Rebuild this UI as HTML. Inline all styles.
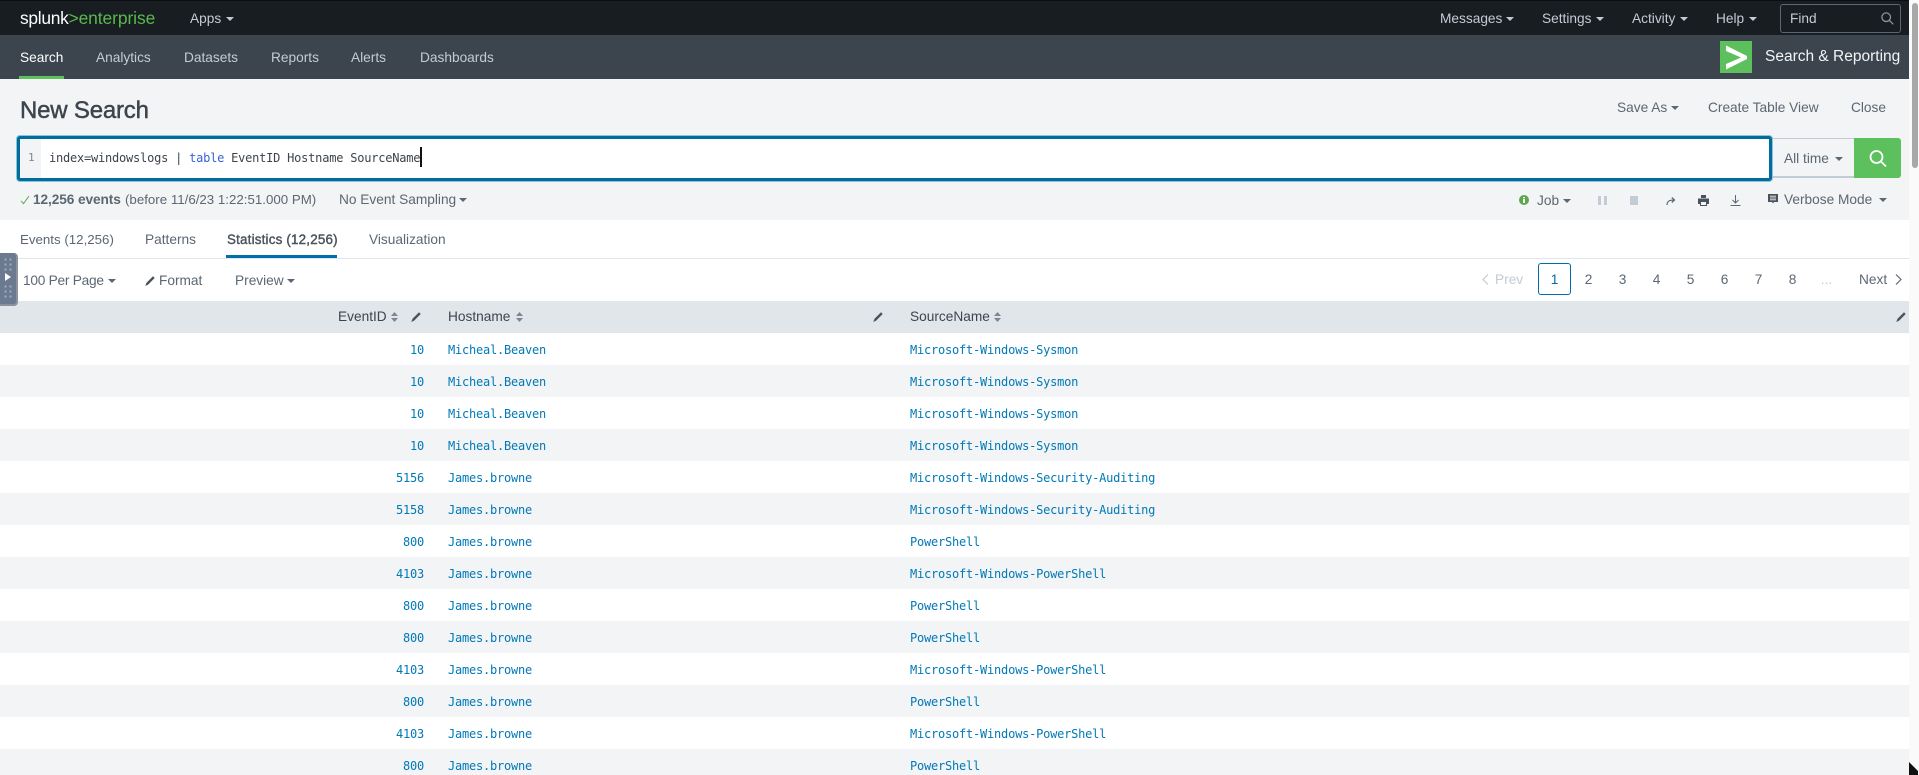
<!DOCTYPE html>
<html lang="en"><head><meta charset="utf-8"><title>Search | Splunk</title>
<style>
*{box-sizing:border-box}
html,body{margin:0;padding:0;width:1919px;height:775px;overflow:hidden;background:#fff;font-family:"Liberation Sans",sans-serif;font-size:13.7px;color:#5c6773}
.a{position:absolute}
.t{position:absolute;white-space:nowrap;line-height:20px;height:20px}
.c{position:absolute;width:0;height:0;border-left:4px solid transparent;border-right:4px solid transparent;border-top:4px solid currentColor}
.top .t,.top .c{color:#c3cbd4}
.nav .t{color:#c3cbd4}
.m{font-family:"DejaVu Sans Mono","Liberation Mono",monospace;font-size:12px;letter-spacing:-.22px}
.r{position:absolute;left:0;width:1909px;height:32px;background:#fff}
.r:nth-child(even){background:#f2f4f5}
.r span{position:absolute;top:7px;line-height:21px;white-space:nowrap;color:#0079b8;font-family:"DejaVu Sans Mono","Liberation Mono",monospace;font-size:12px;letter-spacing:-.22px}
.r .i{right:1485px;text-align:right}
.r .h{left:448px}
.r .s{left:910px}
.pg{position:absolute;top:270px;width:20px;text-align:center;line-height:20px;color:#5c6773}
svg{position:absolute;display:block}
</style></head><body>

<!-- top bar -->
<div class="a top" style="left:0;top:0;width:1909px;height:35px;background:#171d21;border-top:1px solid #0b0e10">
<div class="t" style="left:20px;top:7px;font-size:17.4px;letter-spacing:-.3px;color:#fff">splunk<span style="color:#5cb84d;letter-spacing:-.07px">&gt;enterprise</span></div>
<div class="t" style="left:190px;top:8px">Apps</div><div class="c" style="left:226px;top:16px"></div>
<div class="t" style="left:1440px;top:8px">Messages</div><div class="c" style="left:1506px;top:16px"></div>
<div class="t" style="left:1542px;top:8px">Settings</div><div class="c" style="left:1596px;top:16px"></div>
<div class="t" style="left:1632px;top:8px">Activity</div><div class="c" style="left:1680px;top:16px"></div>
<div class="t" style="left:1716px;top:8px">Help</div><div class="c" style="left:1749px;top:16px"></div>
<div class="a" style="left:1780px;top:3px;width:121px;height:29px;border:1px solid #5c6773;border-radius:3px"></div>
<div class="t" style="left:1790px;top:8px">Find</div>
<svg style="left:1881px;top:11px" width="13" height="13" viewBox="0 0 13 13" fill="none" stroke="#8a949e" stroke-width="1.300"><circle cx="5.200" cy="5.200" r="4.300"/><path d="M8.300 8.300l4 4"/></svg>
</div>

<!-- nav bar -->
<div class="a nav" style="left:0;top:35px;width:1909px;height:44px;background:#3c444d">
<div class="t" style="left:20px;top:13px;color:#fff">Search</div>
<div class="a" style="left:19px;top:41px;width:45px;height:3px;background:#5cc05c"></div>
<div class="t" style="left:96px;top:13px">Analytics</div>
<div class="t" style="left:184px;top:13px">Datasets</div>
<div class="t" style="left:271px;top:13px">Reports</div>
<div class="t" style="left:351px;top:13px">Alerts</div>
<div class="t" style="left:420px;top:13px">Dashboards</div>
<svg style="left:1720px;top:6px" width="32" height="32" viewBox="0 0 32 32"><rect width="32" height="32" fill="#5cc05c"/><path d="M6 4.500L27 15v3L6 28.500v-5.500L21 16.500 6 10z" fill="#fff"/></svg>
<div class="t" style="left:1765px;top:12px;font-size:15.5px;color:#f2f4f5">Search &amp; Reporting</div>
</div>

<!-- search header -->
<div class="a" style="left:0;top:79px;width:1909px;height:141px;background:#f2f4f5"></div>
<div class="t" style="left:20px;top:96px;height:30px;line-height:30px;font-size:24px;letter-spacing:-.2px;color:#3c444d;-webkit-text-stroke:.45px #3c444d">New Search</div>
<div class="t" style="left:1617px;top:98px">Save As</div><div class="c" style="left:1671px;top:106px"></div>
<div class="t" style="left:1708px;top:98px">Create Table View</div>
<div class="t" style="left:1851px;top:98px">Close</div>

<!-- search box -->
<div class="a" style="left:1772px;top:138px;width:84px;height:40px;background:#f2f4f5;border-top:1px solid #c3cbd4;border-bottom:2px solid #c3cbd4"></div>
<div class="t" style="left:1784px;top:149px">All time</div><div class="c" style="left:1835px;top:157px"></div>
<div class="a" style="left:1854px;top:138px;width:47px;height:40px;background:#5cc05c;border-radius:0 3px 3px 0"></div>
<svg style="left:1869px;top:150px" width="18" height="17" viewBox="0 0 18 17" fill="none" stroke="#fff" stroke-width="1.800"><circle cx="7.500" cy="7" r="6"/><path d="M12 11.500l5 5"/></svg>
<div class="a" style="left:17px;top:136px;width:1755px;height:45px;background:#fff;border:3px solid #006d9c;border-radius:3px;box-shadow:0 0 0 1px #8fc1d8"></div>
<div class="a" style="left:20px;top:139px;width:21px;height:39px;background:#f2f4f5"></div>
<div class="t m" style="left:28px;top:148px;color:#7b8794;font-size:11px">1</div>
<div class="t m" style="left:49px;top:148px;color:#3c444d">index=windowslogs | <span style="color:#3863d8">table</span> EventID Hostname SourceName</div>
<div class="a" style="left:420px;top:147px;width:2px;height:20px;background:#111"></div>

<!-- status row -->
<svg style="left:20px;top:195px" width="10" height="10" viewBox="0 0 10 11" fill="none" stroke="#5ca84d" stroke-width="1.100"><path d="M.6 6.500L3.300 9.500 9.300 1.300"/></svg>
<div class="t" style="left:33px;top:190px;color:#5c6773"><b style="letter-spacing:-.1px">12,256 events</b></div>
<div class="t" style="left:125px;top:190px;font-size:13.3px">(before 11/6/23 1:22:51.000 PM)</div>
<div class="t" style="left:339px;top:190px">No Event Sampling</div><div class="c" style="left:459px;top:198px"></div>
<svg style="left:1519px;top:195px" width="10" height="10" viewBox="0 0 10 10"><circle cx="5" cy="5" r="5" fill="#5ba84c"/><rect x="4" y="4" width="2" height="4" fill="#fff"/><rect x="4" y="2" width="2" height="1.300" fill="#fff"/></svg>
<div class="t" style="left:1537px;top:191px">Job</div><div class="c" style="left:1563px;top:199px"></div>
<div class="a" style="left:1598px;top:196px;width:3px;height:9px;background:#c3cbd4"></div>
<div class="a" style="left:1604px;top:196px;width:3px;height:9px;background:#c3cbd4"></div>
<div class="a" style="left:1630px;top:196px;width:8px;height:9px;background:#c3cbd4"></div>
<svg style="left:1666px;top:196px" width="10" height="10" viewBox="0 0 10 10" fill="none" stroke="#5c6773" stroke-width="1.200"><path d="M1 9C1 5.500 3 4 8 4M5.800 1.500L8.500 4 5.800 6.500"/></svg>
<svg style="left:1698px;top:195px" width="11" height="11" viewBox="0 0 11 11" fill="#4a535c"><path d="M3 0h5v3H3zM0 3.500h11V9H9v2H2V9H0z"/><rect x="3" y="7" width="5" height="3" fill="#f2f4f5"/></svg>
<svg style="left:1730px;top:195px" width="11" height="11" viewBox="0 0 11 11" fill="none" stroke="#5c6773" stroke-width="1"><path d="M5.500 0v7.500M2.500 5l3 3 3-3M.5 10.500h10"/></svg>
<svg style="left:1768px;top:194px" width="10" height="10" viewBox="0 0 10 10"><path d="M0 0h10v8H6L5 9.500 4 8H0z" fill="#4a535c"/><path d="M2 2.200h6M2 4h6M2 5.800h6" stroke="#f2f4f5" stroke-width=".8"/></svg>
<div class="t" style="left:1784px;top:190px">Verbose Mode</div><div class="c" style="left:1879px;top:198px"></div>

<!-- tabs -->
<div class="t" style="left:20px;top:230px;font-size:13.3px">Events (12,256)</div>
<div class="t" style="left:145px;top:230px">Patterns</div>
<div class="t" style="left:227px;top:230px;font-size:13.4px;letter-spacing:.19px;color:#4a535c;-webkit-text-stroke:.4px #4a535c">Statistics (12,256)</div>
<div class="t" style="left:369px;top:230px">Visualization</div>
<div class="a" style="left:0;top:258px;width:1909px;height:1px;background:#dfe5ea"></div>
<div class="a" style="left:226px;top:255px;width:111px;height:3px;background:#006eaa"></div>

<!-- toolbar -->
<div class="t" style="left:23px;top:271px;letter-spacing:-.25px">100 Per Page</div><div class="c" style="left:108px;top:279px"></div>
<svg style="left:145px;top:276px" width="10" height="10" viewBox="0 0 10 10"><path d="M.3 10L1.500 6.700 8 .3 9.700 2 3.300 8.500z" fill="#4a535c"/></svg>
<div class="t" style="left:159px;top:271px">Format</div>
<div class="t" style="left:235px;top:271px">Preview</div><div class="c" style="left:287px;top:279px"></div>

<svg style="left:1482px;top:274px" width="7" height="11" viewBox="0 0 7 11" fill="none" stroke="#c3cbd4" stroke-width="1.200"><path d="M6 .5L1 5.500l5 5"/></svg>
<div class="t" style="left:1495px;top:270px;color:#c3cbd4">Prev</div>
<div class="a" style="left:1538px;top:263px;width:33px;height:32px;border:1px solid #006eaa;border-radius:3px"></div>
<div class="pg" style="left:1544.500px;color:#006eaa">1</div>
<div class="pg" style="left:1578.500px">2</div>
<div class="pg" style="left:1612.500px">3</div>
<div class="pg" style="left:1646.500px">4</div>
<div class="pg" style="left:1680.500px">5</div>
<div class="pg" style="left:1714.500px">6</div>
<div class="pg" style="left:1748.500px">7</div>
<div class="pg" style="left:1782.500px">8</div>
<div class="pg" style="left:1816.500px;color:#c3cbd4">...</div>
<div class="t" style="left:1859px;top:270px">Next</div>
<svg style="left:1895px;top:274px" width="7" height="11" viewBox="0 0 7 11" fill="none" stroke="#5c6773" stroke-width="1.200"><path d="M1 .5l5 5-5 5"/></svg>

<!-- table header -->
<div class="a" style="left:0;top:301px;width:1909px;height:32px;background:#e1e6eb"></div>
<div class="t" style="left:338px;top:307px;color:#3c444d">EventID</div>
<svg style="left:391px;top:312px" width="7" height="10" viewBox="0 0 7 10" fill="#7b8794"><path d="M3.500 0L7 4H0zM0 6h7l-3.500 4z"/></svg>
<svg style="left:411px;top:312px" width="10" height="10" viewBox="0 0 10 10"><path d="M.3 10L1.500 6.700 8 .3 9.700 2 3.300 8.500z" fill="#4a535c"/></svg>
<div class="t" style="left:448px;top:307px;color:#3c444d">Hostname</div>
<svg style="left:516px;top:312px" width="7" height="10" viewBox="0 0 7 10" fill="#7b8794"><path d="M3.500 0L7 4H0zM0 6h7l-3.500 4z"/></svg>
<svg style="left:873px;top:312px" width="10" height="10" viewBox="0 0 10 10"><path d="M.3 10L1.500 6.700 8 .3 9.700 2 3.300 8.500z" fill="#4a535c"/></svg>
<div class="t" style="left:910px;top:307px;color:#3c444d">SourceName</div>
<svg style="left:994px;top:312px" width="7" height="10" viewBox="0 0 7 10" fill="#7b8794"><path d="M3.500 0L7 4H0zM0 6h7l-3.500 4z"/></svg>
<svg style="left:1896px;top:312px" width="10" height="10" viewBox="0 0 10 10"><path d="M.3 10L1.500 6.700 8 .3 9.700 2 3.300 8.500z" fill="#4a535c"/></svg>

<!-- rows -->
<div class="a" style="left:0;top:333px;width:1909px;height:442px;overflow:hidden">
<div class="r" style="top:0"><span class="i">10</span><span class="h">Micheal.Beaven</span><span class="s">Microsoft-Windows-Sysmon</span></div>
<div class="r" style="top:32px"><span class="i">10</span><span class="h">Micheal.Beaven</span><span class="s">Microsoft-Windows-Sysmon</span></div>
<div class="r" style="top:64px"><span class="i">10</span><span class="h">Micheal.Beaven</span><span class="s">Microsoft-Windows-Sysmon</span></div>
<div class="r" style="top:96px"><span class="i">10</span><span class="h">Micheal.Beaven</span><span class="s">Microsoft-Windows-Sysmon</span></div>
<div class="r" style="top:128px"><span class="i">5156</span><span class="h">James.browne</span><span class="s">Microsoft-Windows-Security-Auditing</span></div>
<div class="r" style="top:160px"><span class="i">5158</span><span class="h">James.browne</span><span class="s">Microsoft-Windows-Security-Auditing</span></div>
<div class="r" style="top:192px"><span class="i">800</span><span class="h">James.browne</span><span class="s">PowerShell</span></div>
<div class="r" style="top:224px"><span class="i">4103</span><span class="h">James.browne</span><span class="s">Microsoft-Windows-PowerShell</span></div>
<div class="r" style="top:256px"><span class="i">800</span><span class="h">James.browne</span><span class="s">PowerShell</span></div>
<div class="r" style="top:288px"><span class="i">800</span><span class="h">James.browne</span><span class="s">PowerShell</span></div>
<div class="r" style="top:320px"><span class="i">4103</span><span class="h">James.browne</span><span class="s">Microsoft-Windows-PowerShell</span></div>
<div class="r" style="top:352px"><span class="i">800</span><span class="h">James.browne</span><span class="s">PowerShell</span></div>
<div class="r" style="top:384px"><span class="i">4103</span><span class="h">James.browne</span><span class="s">Microsoft-Windows-PowerShell</span></div>
<div class="r" style="top:416px"><span class="i">800</span><span class="h">James.browne</span><span class="s">PowerShell</span></div>
</div>

<!-- sidebar handle -->
<div class="a" style="left:0;top:253px;width:18px;height:53px;background:#6b7a90;border-radius:0 4px 4px 0;border-right:2px solid #8b929b;border-bottom:2px solid #8b929b"></div>
<div class="a" style="left:3px;top:257px;width:10px;height:14px;background-image:radial-gradient(circle,#9aa6b5 1.200px,transparent 1.300px);background-size:5px 5px"></div>
<div class="a" style="left:3px;top:284px;width:10px;height:14px;background-image:radial-gradient(circle,#9aa6b5 1.200px,transparent 1.300px);background-size:5px 5px"></div>
<svg style="left:5px;top:273px" width="6" height="8" viewBox="0 0 6 8"><path d="M0 0l6 4-6 4z" fill="#fff"/></svg>

<!-- scrollbar -->
<div class="a" style="left:1909px;top:0;width:10px;height:775px;background:#fafafa"></div>
<div class="a" style="left:1912px;top:3px;width:6px;height:165px;background:#a8a8a8;border-radius:3px"></div>
<svg style="left:1909px;top:762px" width="10" height="13" viewBox="0 0 10 13"><path d="M0 0l9 9v4H1L0 13z" fill="#111"/></svg>
</body></html>
